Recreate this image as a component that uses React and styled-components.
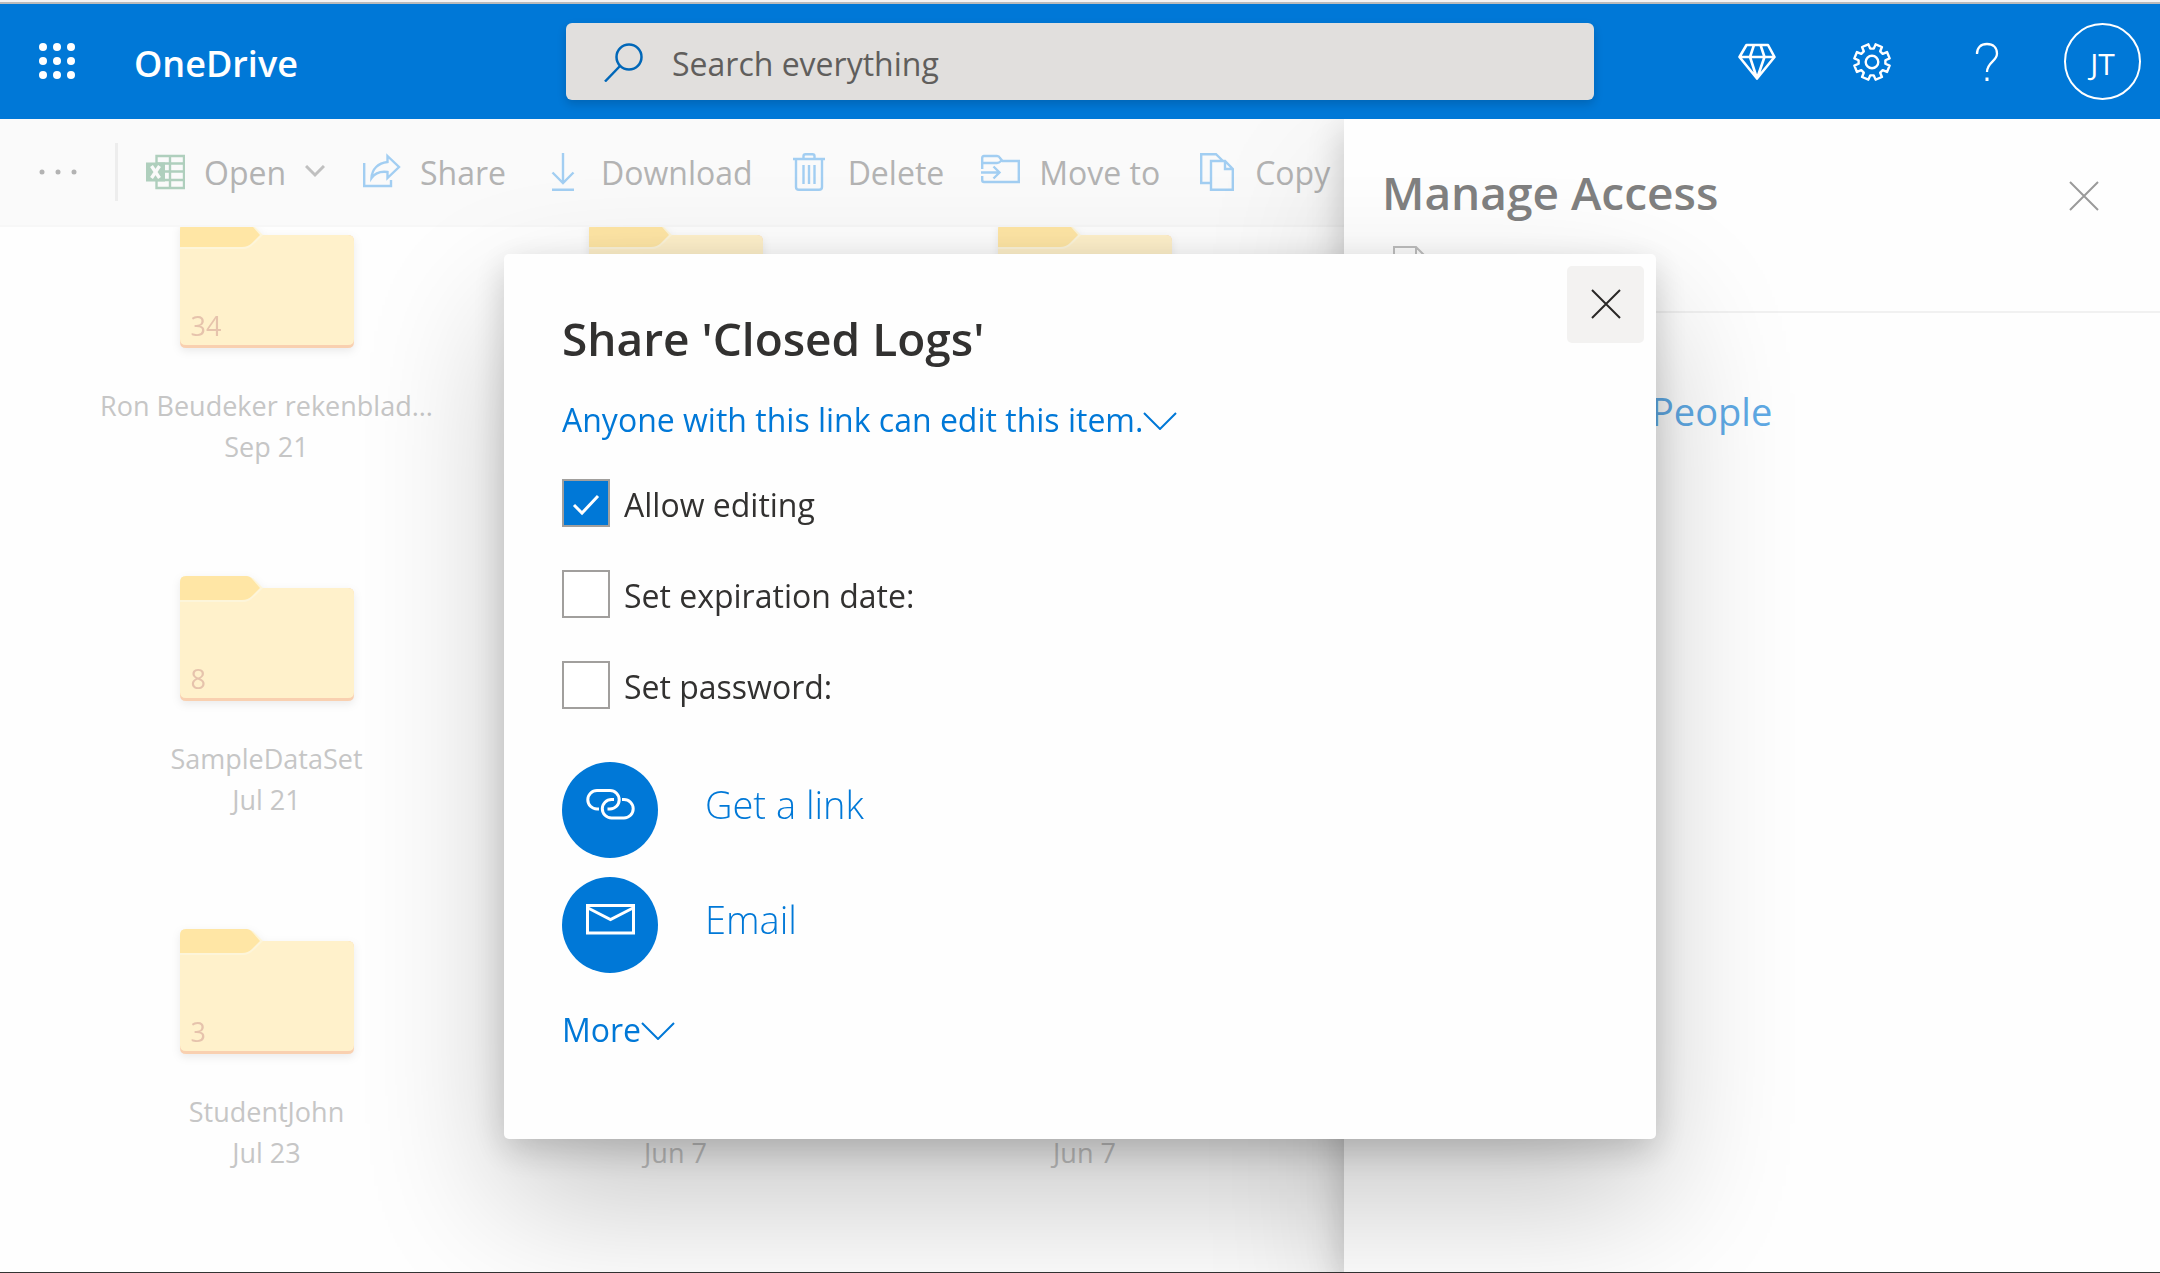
//Global imports
import React, { useState } from 'react'
import styled, { createGlobalStyle } from 'styled-components'

const blue = '#0078d7'
const paleBlue = '#a2cef2'
const paleGreen = '#afcfbd'

const GlobalStyle = createGlobalStyle`
    * { box-sizing: border-box; }
    body {
        margin: 0;
        background-color: #fefefe;
        font-family: "Open Sans", "Noto Sans", sans-serif;
        font-size: 32px;
        color: #323130;
    }
    button, input { font: inherit; color: inherit; }
    button {
        display: flex;
        align-items: center;
        padding: 0;
        border: none;
        background: none;
        white-space: nowrap;
        cursor: pointer;
    }
    svg { display: block; flex: none; fill: none; }
    h1, h2, p { margin: 0; }
`

const Page = styled.div`
    height: 100vh;
    display: flex;
    flex-direction: column;
    overflow: hidden;
    border-top: 2px solid #f3f3f3;
    border-bottom: 1px solid #333333;
`

const Header = styled.header`
    height: 117px;
    flex: none;
    display: grid;
    grid-template-columns: 566px 1fr 566px;
    align-items: center;
    background-color: ${blue};
    border-top: 2px solid #bbbbbb;
    color: white;
`

const HeaderGroup = styled.div`
    display: flex;
    align-items: center;
    justify-content: ${p => p.$end ? 'flex-end' : 'flex-start'};
`

const HeaderButton = styled.button`
    width: 115px;
    height: 115px;
    justify-content: center;
    padding-right: 2px;
    stroke: white;
`

const AccountButton = styled(HeaderButton)`
    padding-right: 0px;
`

const Brand = styled.a`
    padding-top: 4px;
    margin-left: 19px;
    color: white;
    font-size: 36px;
    font-weight: 600;
    text-decoration: none;
`

const SearchBox = styled.label`
    height: 77px;
    display: flex;
    align-items: center;
    gap: 28px;
    padding: 0px 38px;
    border-radius: 6px;
    background-color: #e1dfdd;
    box-shadow: 0px 4px 10px rgba(0, 0, 0, 0.16);
`

const SearchInput = styled.input`
    flex: 1;
    min-width: 0;
    height: 60px;
    padding: 4px 0px 0px;
    border: none;
    outline: none;
    background: none;
    color: #605e5c;
    &::placeholder { color: #605e5c; opacity: 1; }
`

const Avatar = styled.span`
    height: 77px;
    width: 77px;
    display: flex;
    align-items: center;
    justify-content: center;
    padding-top: 4px;
    border: 2px solid white;
    border-radius: 50%;
    font-size: 30px;
`

const Body = styled.div`
    flex: 1;
    min-height: 0;
    display: flex;
    overflow: hidden;
`

const Main = styled.main`
    flex: 1;
    min-width: 0;
    overflow: hidden;
`

const Toolbar = styled.div`
    height: 108px;
    display: flex;
    align-items: center;
    gap: 37px;
    background-color: #fafafa;
    border-bottom: 2px solid #f7f7f7;
    color: #b3b3b3;
`

const MoreCommands = styled.button`
    width: 118px;
    height: 58px;
    flex: none;
    justify-content: center;
    margin-right: -9px;
    border-right: 3px solid #ededed;
    svg { fill: #b3b3b3; }
`

const Command = styled.button`
    gap: 19px;
`

const CommandIcon = styled.span`
    width: 39px;
    display: flex;
    justify-content: center;
    stroke: ${p => p.$color || paleBlue};
    stroke-width: 2.4;
`

const FileArea = styled.div`
    overflow: hidden;
`

// scrolled a few pixels, so the first row starts above the edge
const FileGrid = styled.div`
    display: grid;
    grid-template-columns: repeat(3, 409px);
    grid-auto-rows: 244px;
    row-gap: 109px;
    padding: 0px 62px;
    margin-top: -4px;
`

const Tile = styled.div`
    display: flex;
    flex-direction: column;
    align-items: center;
    justify-content: space-between;
    font-size: 27px;
    line-height: 41px;
    text-align: center;
    color: #c6c6c6;
`

const Folder = styled.div`
    position: relative;
    filter: drop-shadow(0px 3px 4px rgba(0, 0, 0, 0.08));
`

const Count = styled.span`
    position: absolute;
    left: 11px;
    bottom: 7px;
    line-height: 30px;
    color: #e6c3ac;
`

const Panel = styled.aside`
    width: 816px;
    flex: none;
    position: relative;
    background-color: #fefefe;
    box-shadow: 0px 62px 138px rgba(0, 0, 0, 0.13), 0px 11px 35px rgba(0, 0, 0, 0.2);
`

const PanelHead = styled.div`
    height: 194px;
    display: flex;
    align-items: flex-start;
    justify-content: space-between;
    padding: 38px;
    border-bottom: 2px solid #f1f1f1;
`

const PanelTitle = styled.h2`
    font-size: 46px;
    font-weight: 600;
    line-height: 70px;
    color: #808080;
`

const FileMark = styled.div`
    padding: 19px 11px;
    stroke: #bfbfbf;
    stroke-width: 2;
`

const PanelTabs = styled.div`
    padding: 69px 0px 0px 307px;
    font-size: 38px;
    line-height: 58px;
    a { color: #5fa9e4; text-decoration: none; }
`

const CloseButton = styled.button`
    width: 77px;
    height: 77px;
    flex: none;
    justify-content: center;
    border-radius: 5px;
    stroke: ${p => p.$color};
    stroke-width: 2;
`

const ModalLayer = styled.div`
    position: fixed;
    inset: 119px 0px 0px;
    display: flex;
    align-items: center;
    justify-content: center;
`

const Modal = styled.section`
    position: relative;
    width: 1152px;
    padding: 55px 58px 86px;
    border-radius: 5px;
    background-color: #fefefe;
    box-shadow: 0px 62px 138px rgba(0, 0, 0, 0.22), 0px 11px 35px rgba(0, 0, 0, 0.18);
`

const ModalClose = styled(CloseButton)`
    position: absolute;
    top: 12px;
    right: 12px;
    background-color: #f3f2f1;
`

const ModalTitle = styled.h1`
    font-size: 46px;
    font-weight: 600;
    line-height: 58px;
`

const Expander = styled.button`
    margin-top: ${p => p.$top}px;
    line-height: 46px;
    color: ${blue};
    stroke: ${blue};
    stroke-width: 2;
`

const Options = styled.div`
    display: flex;
    flex-direction: column;
    gap: 43px;
    margin: 36px 0px 53px;
`

const Option = styled.label`
    display: flex;
    align-items: center;
    gap: 14px;
`

const OptionText = styled.span`
    padding-top: 4px;
    line-height: 44px;
`

const TickArea = styled.span`
    display: grid;
    > * { grid-area: 1 / 1; }
    svg { pointer-events: none; stroke: white; stroke-width: 3; }
`

const Tick = styled.input`
    appearance: none;
    width: 48px;
    height: 48px;
    margin: 0;
    border: 2px solid #a19f9d;
    background-color: white;
    &:checked { background-color: ${blue}; }
`

const Actions = styled.div`
    display: flex;
    flex-direction: column;
    align-items: flex-start;
    gap: 19px;
`

const Action = styled.button`
    gap: 47px;
    color: ${blue};
    font-size: 38px;
    font-weight: 300;
`

const ActionCircle = styled.span`
    width: 96px;
    height: 96px;
    display: flex;
    align-items: center;
    justify-content: center;
    padding-bottom: 10px;
    border-radius: 50%;
    background-color: ${blue};
    stroke: white;
    stroke-width: 3;
`

const ActionText = styled.span`
    padding-bottom: 12px;
`

const Waffle = () => (
    <svg width="38" height="38" stroke="none">
        {[4, 18, 32].map(y => [5, 19, 33].map(x => (
            <circle key={`${x}-${y}`} cx={x} cy={y} r="4" fill="white" />
        )))}
    </svg>
)

const SearchIcon = () => (
    <svg width="40" height="40" stroke="#0067b8" strokeWidth="2.5">
        <circle cx="25" cy="15" r="12.5" />
        <path d="M16 24L1 39.5" />
    </svg>
)

const DiamondIcon = () => (
    <svg width="38" height="38" strokeWidth="2.6" strokeLinejoin="round">
        <path d="M8.5 2H30L36.5 14L19 35.5L1.5 14ZM1.5 14H36.5M16 2L12 14L19 35.5L26.5 14L22.5 2" />
    </svg>
)

const gearPoints = Array.from({ length: 8 }, (_, i) => {
    const tooth = 22.5 + i * 45
    return [[-15, 13.5], [-11, 18], [11, 18], [15, 13.5]].map(([turn, r]) => {
        const angle = (tooth + turn) * Math.PI / 180
        return `${(19 + r * Math.cos(angle)).toFixed(2)},${(19 + r * Math.sin(angle)).toFixed(2)}`
    }).join(' ')
}).join(' ')

const GearIcon = () => (
    <svg width="38" height="38" strokeWidth="2.4" strokeLinejoin="round">
        <polygon points={gearPoints} />
        <circle cx="19" cy="19" r="6.3" />
    </svg>
)

const HelpIcon = () => (
    <svg width="24" height="40" strokeWidth="2.3">
        <path d="M2 12C2 5.5 6 2 12 2C18 2 22 5.5 22 11.5C22 19.5 12 20 12 30" />
        <path d="M12 35.5V39" strokeWidth="3" />
    </svg>
)

const CloseIcon = () => (
    <svg width="30" height="30"><path d="M1 1L29 29M29 1L1 29" /></svg>
)

const Chevron = () => (
    <svg width="34" height="20"><path d="M1 3L17 19L33 3" /></svg>
)

const ExcelIcon = () => (
    <svg width="39" height="36">
        <path d="M10.5 2H38V34H10.5ZM24 2V34M10.5 9.5H38M10.5 17.5H38M10.5 26H38" />
        <path d="M0 8.5H19V27.5H0Z" fill={paleGreen} stroke="none" />
        <path d="M5.5 12L13.5 24M13.5 12L5.5 24" stroke="#fafafa" strokeWidth="3.4" />
    </svg>
)

const ShareIcon = () => (
    <svg width="38" height="38">
        <path d="M1.2 10V33H28V27" />
        <path d="M24.5 3L36 14L24.5 25V19C17 18 12 20 8.5 25C9 16 15 10 24.5 9Z" />
    </svg>
)

const DownloadIcon = () => (
    <svg width="24" height="38"><path d="M12 0V30M1.5 19.5L12 30L22.500 19.5M1 36.8H23" /></svg>
)

const DeleteIcon = () => (
    <svg width="32" height="38">
        <path d="M0 6H32M10.5 6V3Q10.5 1.2 12.5 1.2H19.5Q21.5 1.2 21.5 3V6M3 6V34Q3 36.8 6 36.8H26Q29 36.8 29 34V6M10.5 12V31M16 12V31M21.5 12V31" />
    </svg>
)

const MoveIcon = () => (
    <svg width="39" height="38">
        <path d="M1.2 16V5Q1.2 3 3 3H16Q18 3 19 5L21.5 8H37.8V29H3Q1.2 29 1.2 27V23M1 10H16Q18 10 20 8M0 19.5H18M12.5 13.5L18.5 19.5L12.5 25.5" />
    </svg>
)

const CopyIcon = () => (
    <svg width="34" height="38">
        <path d="M11 30H1.2V1.2H16L23 8M11 8H25L32.800 16V36.8H11ZM25 8V16H33" />
    </svg>
)

const FolderIcon = () => (
    <svg width="174" height="125">
        <path d="M0 12H168Q174 12 174 18V119Q174 125 168 125H6Q0 125 0 119Z" fill="#f9d0b0" />
        <path d="M0 12H168Q174 12 174 18V116Q174 122 168 122H6Q0 122 0 116Z" fill="#fff1cb" />
        <path d="M0 6Q0 0 6 0H66Q71 0 75 4L83 12L75 20Q69 26 63 26H0Z" fill="#fdf5da" />
        <path d="M0 6Q0 0 6 0H66Q70 0 73 4L80 12L72 20Q68 24 62 24H0Z" fill="#ffe6a5" />
    </svg>
)

const LinkIcon = () => (
    <svg width="49" height="31">
        <path d="M13 20H11A9.2 9.2 0 0 1 11 1.6H24A9.2 9.2 0 0 1 24 20H21.5M36 10.6H38A9.2 9.2 0 0 1 38 29H25.5A9.2 9.2 0 0 1 25.5 10.6H28" />
    </svg>
)

const MailIcon = () => (
    <svg width="49" height="31"><path d="M1.5 1.5H47.5V29H1.5ZM2 4L24.5 15.5L47 4" /></svg>
)

const commands = [
    { text: 'Open', icon: <ExcelIcon />, color: paleGreen, menu: true },
    { text: 'Share', icon: <ShareIcon /> },
    { text: 'Download', icon: <DownloadIcon /> },
    { text: 'Delete', icon: <DeleteIcon /> },
    { text: 'Move to', icon: <MoveIcon /> },
    { text: 'Copy', icon: <CopyIcon /> },
]

const folders = [
    { id: 1, count: 34, name: 'Ron Beudeker rekenblad...', date: 'Sep 21' },
    { id: 2 },
    { id: 3 },
    { id: 4, count: 8, name: 'SampleDataSet', date: 'Jul 21' },
    { id: 5 },
    { id: 6 },
    { id: 7, count: 3, name: 'StudentJohn', date: 'Jul 23' },
    { id: 8, date: 'Jun 7' },
    { id: 9, date: 'Jun 7' },
]

const CheckOption = ({ text, initial = false }) => {
    const [checked, setChecked] = useState(initial)

    return (
        <Option>
            <TickArea>
                <Tick type="checkbox" checked={checked} onChange={() => setChecked(!checked)} />
                {checked ? <svg width="48" height="48"><path d="M12 26L20 34L36 17" /></svg> : null}
            </TickArea>
            <OptionText>{text}</OptionText>
        </Option>
    )
}

const App = () => {
    return (
        <Page>
            <GlobalStyle />
            <Header>
                <HeaderGroup>
                    <HeaderButton aria-label="App launcher"><Waffle /></HeaderButton>
                    <Brand href="#">OneDrive</Brand>
                </HeaderGroup>
                <SearchBox>
                    <SearchIcon />
                    <SearchInput type="text" placeholder="Search everything" aria-label="Search everything" />
                </SearchBox>
                <HeaderGroup $end>
                    <HeaderButton aria-label="Premium"><DiamondIcon /></HeaderButton>
                    <HeaderButton aria-label="Settings"><GearIcon /></HeaderButton>
                    <HeaderButton aria-label="Help"><HelpIcon /></HeaderButton>
                    <AccountButton aria-label="Account"><Avatar>JT</Avatar></AccountButton>
                </HeaderGroup>
            </Header>

            <Body>
                <Main>
                    <Toolbar>
                        <MoreCommands aria-label="More commands">
                            <svg width="38" height="6">
                                <circle cx="3" cy="3" r="2.5" />
                                <circle cx="19" cy="3" r="2.5" />
                                <circle cx="35" cy="3" r="2.5" />
                            </svg>
                        </MoreCommands>
                        {
                            commands.map(item => (
                                <Command key={item.text}>
                                    <CommandIcon $color={item.color}>{item.icon}</CommandIcon>
                                    {item.text}
                                    {item.menu
                                        ? <svg width="20" height="14" stroke="#c0c0c0" strokeWidth="3"><path d="M1 1L10 10L19 1" /></svg>
                                        : null}
                                </Command>
                            ))
                        }
                    </Toolbar>
                    <FileArea>
                        <FileGrid>
                            {
                                folders.map(item => (
                                    <Tile key={item.id}>
                                        <Folder>
                                            <FolderIcon />
                                            <Count>{item.count}</Count>
                                        </Folder>
                                        <div>
                                            <p>{item.name}</p>
                                            <p>{item.date}</p>
                                        </div>
                                    </Tile>
                                ))
                            }
                        </FileGrid>
                    </FileArea>
                </Main>

                <Panel>
                    <PanelHead>
                        <div>
                            <PanelTitle>Manage Access</PanelTitle>
                            <FileMark>
                                <svg width="34" height="40"><path d="M1 39V1H23L33 11V39M23 1V11H33" /></svg>
                            </FileMark>
                        </div>
                        <CloseButton $color="#9a9a9a" aria-label="Close panel"><CloseIcon /></CloseButton>
                    </PanelHead>
                    <PanelTabs><a href="#">People</a></PanelTabs>
                </Panel>
            </Body>

            <ModalLayer>
                <Modal role="dialog" aria-labelledby="share-title">
                    <ModalClose $color="#292827" aria-label="Close"><CloseIcon /></ModalClose>
                    <ModalTitle id="share-title">Share 'Closed Logs'</ModalTitle>
                    <Expander $top={30}>Anyone with this link can edit this item.<Chevron /></Expander>
                    <Options>
                        <CheckOption text="Allow editing" initial />
                        <CheckOption text="Set expiration date:" />
                        <CheckOption text="Set password:" />
                    </Options>
                    <Actions>
                        <Action>
                            <ActionCircle><LinkIcon /></ActionCircle>
                            <ActionText>Get a link</ActionText>
                        </Action>
                        <Action>
                            <ActionCircle><MailIcon /></ActionCircle>
                            <ActionText>Email</ActionText>
                        </Action>
                    </Actions>
                    <Expander $top={34}>More<Chevron /></Expander>
                </Modal>
            </ModalLayer>
        </Page>
    )
}

export default App
